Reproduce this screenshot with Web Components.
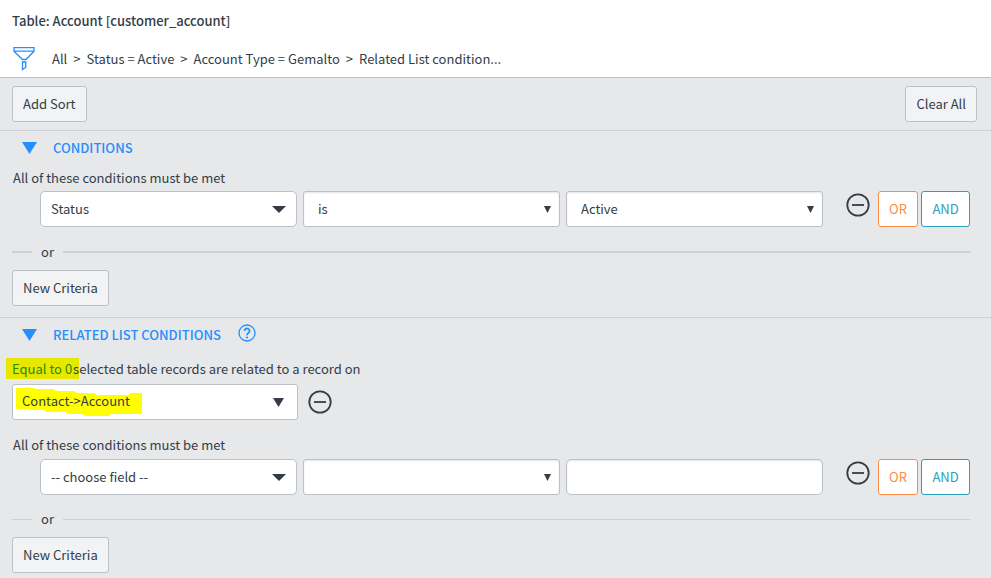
<!DOCTYPE html>
<html lang="en">
<head>
<meta charset="utf-8">
<meta name="viewport" content="width=device-width, initial-scale=1">
<title>Account filter</title>
<style>
  body {
    --border: #bcc0c7;
    --rule: #cdd2d8;
    --blue: #278efc;
    --ink: #343d47;

    margin: 0;
    min-height: 100vh;
    background-color: #e6e8ea;
    color: var(--ink);
    font: 13px/20px "Noto Sans CJK SC", "Open Sans", sans-serif;
  }
</style>
</head>
<body>
  <filter-header table="Account [customer_account]">
    <a href="#">All</a>
    <a href="#">Status = Active</a>
    <a href="#">Account Type = Gemalto</a>
    <a href="#">Related List condition...</a>
  </filter-header>

  <main>
    <filter-toolbar>
      <plain-button>Add Sort</plain-button>
      <plain-button>Clear All</plain-button>
    </filter-toolbar>

    <filter-section heading="CONDITIONS">
      <criteria-group>
        <condition-row>
          <field-select label="Field" value="Status" arrow="wide"></field-select>
          <field-select label="Operator" value="is" inset></field-select>
          <field-select label="Value" value="Active" inset></field-select>
        </condition-row>
      </criteria-group>
    </filter-section>

    <filter-section heading="RELATED LIST CONDITIONS" help>
      <related-list quantity="Equal to 0" value="Contact-&gt;Account"></related-list>
      <criteria-group thin>
        <condition-row>
          <field-select label="Field" value="-- choose field --" arrow="wide"></field-select>
          <field-select label="Operator" value="" inset></field-select>
          <field-input label="Value"></field-input>
        </condition-row>
      </criteria-group>
    </filter-section>
  </main>

<script>
// attaches a shadow root filled from the given markup
class BaseElement extends HTMLElement {
  connectedCallback() {
    if (this.shadowRoot) return;
    const template = document.createElement("template");
    template.innerHTML = this.render();
    this.attachShadow({ mode: "open" });
    this.shadowRoot.appendChild(template.content.cloneNode(true));
  }

  attr(name) {
    return (this.getAttribute(name) || "").replace(/&/g, "&amp;").replace(/</g, "&lt;").replace(/"/g, "&quot;");
  }
}

class FilterHeader extends BaseElement {
  render() {
    return `
      <style>
        :host {
          display: block;
          padding: 11px 12px 7px;
          background-color: #fff;
          border-bottom: 1px solid var(--border);
        }
        h1 {
          margin: 0 0 17px;
          font-size: 13px;
          font-weight: 500;
          line-height: 20px;
        }
        .crumbs {
          display: flex;
          align-items: center;
          height: 22px;
        }
        .funnel {
          display: block;
          width: 24px;
          height: 24px;
          margin-right: 16px;
        }
        ::slotted(a) {
          color: inherit;
          text-decoration: none;
          white-space: nowrap;
        }
        ::slotted(a:not(:last-child))::after {
          content: ">";
          margin: 0 6px;
        }
      </style>
      <h1>Table: ${this.attr("table")}</h1>
      <nav class="crumbs" aria-label="Filter">
        <svg class="funnel" viewBox="0 0 24 24" fill="none" stroke="#278efc" stroke-width="1.300" aria-hidden="true">
          <path d="M2 0.700h20v3.500h-20zM2 4.200l8.500 8.300h3.500l8-8.300M10.500 15h3.200v5.500l-3.200 2z"/>
        </svg>
        <slot></slot>
      </nav>
    `;
  }
}

class FilterToolbar extends BaseElement {
  render() {
    return `
      <style>
        :host {
          display: flex;
          justify-content: space-between;
          padding: 8px 14px 8px 12px;
        }
      </style>
      <slot></slot>
    `;
  }
}

class PlainButton extends BaseElement {
  render() {
    return `
      <style>
        :host { display: inline-block; }
        button {
          display: block;
          height: 36px;
          padding: 0 10px;
          border: 1px solid var(--border);
          border-radius: 3px;
          background-color: #f1f3f4;
          color: inherit;
          font: inherit;
        }
      </style>
      <button type="button"><slot></slot></button>
    `;
  }
}

class FilterSection extends BaseElement {
  render() {
    const help = `
      <button class="help" type="button" aria-label="Help">
        <svg width="18" height="18" viewBox="0 0 18 18" fill="none" stroke="#278efc" stroke-width="1.300">
          <circle cx="9" cy="9" r="8"/>
          <path d="M6.500 7a2.500 2.500 0 1 1 3.800 2.100Q9 9.900 9 11.200" stroke-width="1.800"/>
          <circle cx="9" cy="13.500" r="1.100" fill="#278efc" stroke="none"/>
        </svg>
      </button>`;

    return `
      <style>
        :host {
          display: block;
          padding: 6px 20px 11px 12px;
          border-top: 1px solid var(--rule);
        }
        header {
          display: flex;
          align-items: center;
          height: 21px;
          color: var(--blue);
        }
        button {
          display: block;
          padding: 0;
          border: 0;
          background: none;
        }
        svg { display: block; }
        .toggle { margin: 0 16px 0 10px; }
        h2 {
          margin: 0;
          font-size: 13px;
          font-weight: 500;
          line-height: 20px;
        }
        .help {
          margin-left: 17px;
          padding-bottom: 4px;
        }
      </style>
      <header>
        <button class="toggle" type="button" aria-label="Collapse" aria-expanded="true">
          <svg width="15" height="12" viewBox="0 0 15 12"><path d="M0 0h15l-7.500 12z" fill="#278efc"/></svg>
        </button>
        <h2>${this.attr("heading")}</h2>
        ${this.hasAttribute("help") ? help : ""}
      </header>
      <slot></slot>
    `;
  }
}

const ARROWS = {
  wide: `<svg width="14" height="7" viewBox="0 0 14 7"><path d="M0 0h14l-7 7z"/></svg>`,
  tall: `<svg width="11" height="9" viewBox="0 0 11 9"><path d="M0 0h11l-5.500 9z"/></svg>`,
  small: `<svg width="7" height="7" viewBox="0 0 7 7"><path d="M0 0h7l-3.500 7z"/></svg>`
};

class FieldSelect extends BaseElement {
  render() {
    const arrow = ARROWS[this.getAttribute("arrow")] || ARROWS.small;
    return `
      <style>
        :host {
          --pad: 10px;
          --arrow-gap: 10px;

          display: grid;
          box-sizing: border-box;
          height: 36px;
          border: 1px solid var(--border);
          border-radius: 5px;
          background-color: #fff;
        }
        :host([inset]) {
          --pad: 14px;
          --arrow-gap: 8px;

          border-radius: 3px;
          box-shadow: inset 0 1px 2px #e4e6e9;
        }
        :host([arrow="tall"]) {
          --pad: 9px;
          --arrow-gap: 13px;

          border-radius: 3px;
        }
        select, svg, ::slotted(svg) {
          grid-area: 1 / 1;
        }
        select {
          appearance: none;
          min-width: 0;
          margin: 0;
          padding: 0 28px 0 var(--pad);
          border: 0;
          background: none;
          color: inherit;
          font: inherit;
          z-index: 1;
        }
        svg {
          place-self: center end;
          margin-right: var(--arrow-gap);
          fill: var(--ink);
        }
        :host([arrow="tall"]) select {
          padding-bottom: 2px;
        }
      </style>
      <slot></slot>
      <select aria-label="${this.attr("label")}">
        <option>${this.attr("value")}</option>
      </select>
      ${arrow}
    `;
  }
}

class FieldInput extends BaseElement {
  render() {
    return `
      <style>
        :host { display: block; }
        input {
          display: block;
          box-sizing: border-box;
          width: 100%;
          height: 36px;
          padding: 0 14px;
          border: 1px solid var(--border);
          border-radius: 5px;
          background-color: #fff;
          box-shadow: inset 0 1px 2px #e4e6e9;
          color: inherit;
          font: inherit;
        }
      </style>
      <input type="text" aria-label="${this.attr("label")}">
    `;
  }
}

class RemoveButton extends BaseElement {
  render() {
    return `
      <style>
        :host { display: block; }
        button {
          display: block;
          padding: 0;
          border: 0;
          background: none;
        }
        svg { display: block; }
      </style>
      <button type="button" aria-label="Remove">
        <svg width="24" height="24" viewBox="0 0 24 24" fill="none" stroke="#343d47" stroke-width="1.800">
          <circle cx="12" cy="12" r="10.700"/>
          <path d="M6 12h12"/>
        </svg>
      </button>
    `;
  }
}

class ConditionRow extends BaseElement {
  render() {
    return `
      <style>
        :host {
          display: flex;
          align-items: center;
          padding: 0 1px 0 28px;
        }
        .fields {
          flex: 1;
          display: grid;
          grid-template-columns: repeat(3, minmax(0, 1fr));
          gap: 6px;
        }
        remove-button {
          margin: 0 8px 8px 23px;
        }
        button {
          height: 36px;
          padding: 0;
          border: 1px solid;
          border-radius: 3px;
          background-color: #fff;
          font: inherit;
        }
        .or {
          width: 40px;
          margin-right: 3px;
          color: #fc8c44;
        }
        .and {
          width: 49px;
          color: #2b9fbe;
        }
      </style>
      <div class="fields"><slot></slot></div>
      <remove-button></remove-button>
      <button class="or" type="button">OR</button>
      <button class="and" type="button">AND</button>
    `;
  }
}

class CriteriaGroup extends BaseElement {
  render() {
    return `
      <style>
        :host {
          --line: 2px;
          --label-gap: 3px;
          --or-gap: 15px;

          display: block;
          padding-top: 10px;
        }
        :host([thin]) {
          --line: 1px;
          --label-gap: 4px;
          --or-gap: 14px;

          padding-top: 15px;
        }
        p {
          margin: 0 0 var(--label-gap) 1px;
        }
        .divider {
          display: flex;
          align-items: center;
          gap: 9px;
          margin: var(--or-gap) 0 8px;
        }
        .divider::before,
        .divider::after {
          content: "";
          width: 20px;
          height: var(--line);
          background-color: var(--rule);
        }
        .divider::after {
          flex: 1;
        }
      </style>
      <p>All of these conditions must be met</p>
      <slot></slot>
      <div class="divider">or</div>
      <plain-button>New Criteria</plain-button>
    `;
  }
}

class RelatedList extends BaseElement {
  render() {
    return `
      <style>
        :host {
          display: block;
          padding-top: 13px;
        }
        p { margin: 0 0 5px; }
        a {
          display: inline-block;
          height: 21px;
          margin: 0 -6px -1px;
          padding: 0 7px 0 6px;
          background-color: #e6e800;
          color: #2a8a00;
          line-height: 21px;
          text-decoration: none;
        }
        .picker {
          display: flex;
          align-items: center;
          gap: 10px;
        }
        field-select { width: 286px; }
        .highlight {
          display: block;
          margin: 3px;
        }
      </style>
      <p><a href="#">${this.attr("quantity")}</a><span>selected table records are related to a record on</span></p>
      <div class="picker">
        <field-select label="Related list" value="${this.attr("value")}" arrow="tall">
          <svg class="highlight" width="126" height="28" viewBox="0 0 126 28" aria-hidden="true">
            <path d="M0 0h18l2 1h18l2 2h18l3 2h17l3 2h31l3-2h11v21h-31l-2 2h-24l-3-2h-14l-3-2h-18l-3-2h-13l-2-1h-13z" fill="#ff0"/>
          </svg>
        </field-select>
        <remove-button></remove-button>
      </div>
    `;
  }
}

customElements.define("filter-header", FilterHeader);
customElements.define("filter-toolbar", FilterToolbar);
customElements.define("plain-button", PlainButton);
customElements.define("filter-section", FilterSection);
customElements.define("field-select", FieldSelect);
customElements.define("field-input", FieldInput);
customElements.define("remove-button", RemoveButton);
customElements.define("condition-row", ConditionRow);
customElements.define("criteria-group", CriteriaGroup);
customElements.define("related-list", RelatedList);
</script>
</body>
</html>
